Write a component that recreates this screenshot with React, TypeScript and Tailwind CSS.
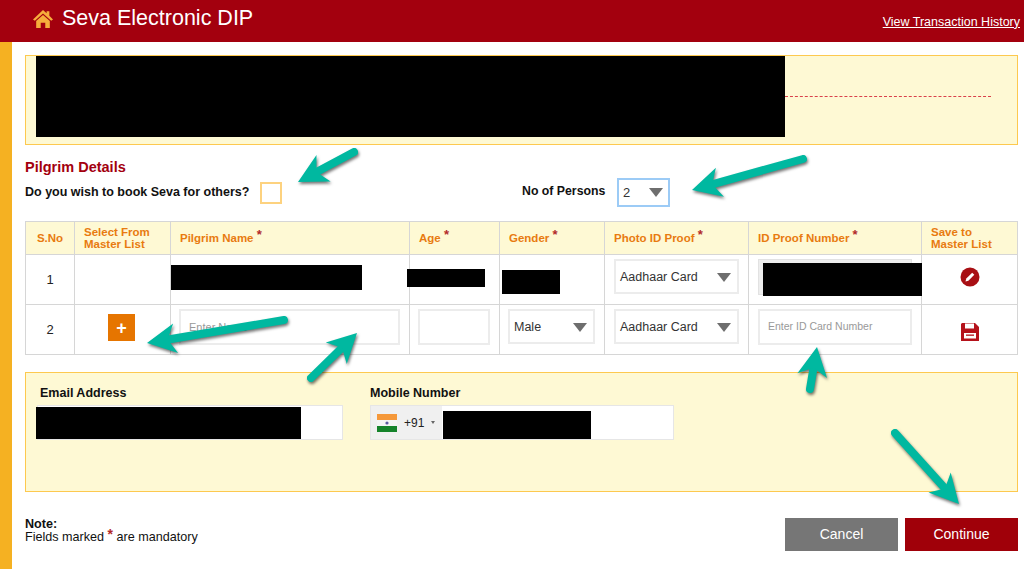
import React from 'react';

const sans = "font-['Liberation_Sans',Arial,sans-serif]";

const Star = () => <sup className="text-[#b22a2a] text-[13px] font-bold top-[-3px]">*</sup>;

const Select: React.FC<{ value: string; className: string }> = ({ value, className }) => (
  <div className={`h-[35px] border-2 border-[#ececec] bg-white flex items-center justify-between pl-[4px] pr-[6px] pt-[1px] text-[12.5px] text-[#333] ${className}`}>
    <span>{value}</span>
    <span className="w-0 h-0 border-x-[7px] border-x-transparent border-t-[9px] border-t-[#6e6e6e]"></span>
  </div>
);

const Arrow: React.FC<{ from: [number, number]; to: [number, number] }> = ({ from, to }) => {
  const dx = to[0] - from[0];
  const dy = to[1] - from[1];
  const len = Math.hypot(dx, dy);
  const ux = dx / len;
  const uy = dy / len;
  const at = (back: number, side: number) =>
    `${to[0] - ux * back - uy * side},${to[1] - uy * back + ux * side}`;
  const neck = [to[0] - ux * 20, to[1] - uy * 20];
  return (
    <g style={{ filter: 'drop-shadow(1px 2px 1.5px rgba(0,0,0,0.55))' }}>
      <line x1={from[0]} y1={from[1]} x2={neck[0]} y2={neck[1]} stroke="#00b8a0" strokeWidth="8" strokeLinecap="round" />
      <polygon points={`${to[0]},${to[1]} ${at(29, 15)} ${at(21, 0)} ${at(29, -15)}`} fill="#00b8a0" />
    </g>
  );
};

const headCell = 'border border-[#d6d6d6] bg-[#fef9d4] text-[#e87b10] text-[11.5px] font-bold leading-[12px] align-middle';
const bodyCell = 'border border-[#d6d6d6] align-middle relative';
const fieldCell = 'border border-[#d6d6d6] align-top relative pt-[4px]';

export default function App() {
  return (
    <div className={`relative w-[1024px] h-[569px] overflow-hidden bg-white flex flex-col ${sans}`}>
      <header className="h-[42px] bg-[#a3000e] flex items-center justify-between pl-[32px] pr-[4px] text-white">
        <div className="flex items-center gap-[8px] pb-[5px]">
          <svg width="22" height="20" viewBox="0 0 24 22">
            <path d="M12 1 L1 11.5 L3 13 L12 5 L21 13 L23 11.5 L19 7.5 V2.5 H16 V4.7 Z" fill="#f6ad3c" />
            <path d="M4.5 13.2 L12 6.6 L19.5 13.2 V21 H14.5 V15 H9.5 V21 H4.5 Z" fill="#f6ad3c" />
          </svg>
          <span className="text-[21.5px] leading-none">Seva Electronic DIP</span>
        </div>
        <a className="text-[12.5px] underline mt-[2px]">View Transaction History</a>
      </header>

      <div className="flex-1 flex">
        <div className="w-[12px] shrink-0 bg-[#f5b122]"></div>
        <main className="flex-1 min-w-0 pl-[13px] pr-[6px] pt-[13px]">
          <section className="h-[90px] border border-[#fdc94f] bg-[#fef9d4] flex items-start pl-[10px]">
            <div className="w-[749px] h-[81px] bg-black"></div>
            <div className="w-[206px] mt-[40px] border-t border-dashed border-[#d9414a]"></div>
          </section>

          <h2 className="mt-[14px] text-[14.5px] leading-[16px] font-bold text-[#a3000e]">Pilgrim Details</h2>
          <div className="flex items-center h-[29px] mt-[3px]">
            <span className="w-[235px] text-[12.5px] font-bold text-[#111]">Do you wish to book Seva for others?</span>
            <span className="w-[22px] h-[22px] border-2 border-[#fdd27f] bg-white"></span>
            <span className="ml-[240px] w-[95px] text-[12.3px] font-bold text-[#111] -mt-[2px]">No of Persons</span>
            <div className="w-[53px] h-[29px] border-2 border-[#9ccbf6] bg-white flex items-center justify-between pl-[4px] pr-[5px] text-[13px] text-[#333]">
              <span>2</span>
              <span className="w-0 h-0 border-x-[7px] border-x-transparent border-t-[9px] border-t-[#6e6e6e]"></span>
            </div>
          </div>

          <table className="mt-[14px] w-[992px] table-fixed border-collapse">
            <colgroup>
              <col className="w-[49px]" />
              <col className="w-[96px]" />
              <col className="w-[239px]" />
              <col className="w-[90px]" />
              <col className="w-[105px]" />
              <col className="w-[144px]" />
              <col className="w-[173px]" />
              <col className="w-[96px]" />
            </colgroup>
            <thead>
              <tr className="h-[33px]">
                <th className={`${headCell} text-center`}>S.No</th>
                <th className={`${headCell} text-left pl-[9px]`}>Select From<br />Master List</th>
                <th className={`${headCell} text-left pl-[9px]`}>Pilgrim Name <Star /></th>
                <th className={`${headCell} text-left pl-[9px]`}>Age <Star /></th>
                <th className={`${headCell} text-left pl-[9px]`}>Gender <Star /></th>
                <th className={`${headCell} text-left pl-[9px]`}>Photo ID Proof <Star /></th>
                <th className={`${headCell} text-left pl-[9px]`}>ID Proof Number <Star /></th>
                <th className={`${headCell} text-left pl-[9px]`}>Save to<br />Master List</th>
              </tr>
            </thead>
            <tbody className="text-[13px] text-[#222]">
              <tr className="h-[50px]">
                <td className={`${bodyCell} text-center`}>1</td>
                <td className={bodyCell}></td>
                <td className={bodyCell}>
                  <div className="absolute left-0 top-[10px] w-[191px] h-[25px] bg-black"></div>
                </td>
                <td className={bodyCell}>
                  <div className="absolute left-[-3px] top-[14px] w-[78px] h-[18px] bg-black"></div>
                </td>
                <td className={bodyCell}>
                  <div className="absolute left-[2px] top-[15px] w-[58px] h-[24px] bg-black"></div>
                </td>
                <td className={`${fieldCell} px-[9px]`}>
                  <Select value="Aadhaar Card" className="w-[125px]" />
                </td>
                <td className={`${fieldCell} pl-[9px]`}>
                  <div className="w-[154px] h-[36px] bg-[#eeeeee] border border-[#e2e2e2]"></div>
                  <div className="absolute left-[14px] top-[8px] w-[159px] h-[33px] bg-black"></div>
                </td>
                <td className="border border-[#d6d6d6] align-top pt-[12px]">
                  <svg className="mx-auto" width="20" height="20" viewBox="0 0 20 20">
                    <circle cx="10" cy="10" r="9.5" fill="#a80f14" />
                    <path d="M5.5 14.5 L6.3 11.6 L12.2 5.7 L14.3 7.8 L8.4 13.7 Z" fill="#fff" />
                  </svg>
                </td>
              </tr>
              <tr className="h-[50px]">
                <td className={`${bodyCell} text-center`}>2</td>
                <td className="border border-[#d6d6d6] align-top pt-[9px] pr-[2px]">
                  <button className="mx-auto flex items-center justify-center w-[27px] h-[27px] bg-[#e67500] text-white text-[18px] font-bold leading-none">+</button>
                </td>
                <td className={`${fieldCell} pl-[8px] pr-[9px]`}>
                  <div className="h-[36px] border-2 border-[#ececec] flex items-center pl-[8px] text-[11px] text-[#999]">Enter Name</div>
                </td>
                <td className={`${fieldCell} pl-[8px]`}>
                  <div className="w-[72px] h-[36px] border-2 border-[#ececec]"></div>
                </td>
                <td className={`${fieldCell} pl-[8px]`}>
                  <Select value="Male" className="w-[87px]" />
                </td>
                <td className={`${fieldCell} px-[9px]`}>
                  <Select value="Aadhaar Card" className="w-[125px]" />
                </td>
                <td className={`${fieldCell} pl-[9px]`}>
                  <div className="w-[154px] h-[36px] border-2 border-[#ececec] flex items-center pl-[8px] text-[10.5px] text-[#999]">Enter ID Card Number</div>
                </td>
                <td className="border border-[#d6d6d6] align-top pt-[17px]">
                  <svg className="mx-auto" width="20" height="20" viewBox="0 0 20 20">
                    <path fillRule="evenodd" d="M2 1 H15 L19 5 V19 H1 V2 Z M5 1.5 V6.5 H14 V1.5 Z M4 11 V16.5 H16 V11 Z" fill="#b5121b" />
                    <rect x="6" y="12.5" width="8" height="1.3" fill="#b5121b" />
                  </svg>
                </td>
              </tr>
            </tbody>
          </table>

          <section className="mt-[17px] h-[120px] border border-[#fdc94f] bg-[#fef9d4] pl-[11px] pt-[13px] flex gap-[27px]">
            <div className="w-[306px]">
              <label className="block pl-[3px] text-[12.5px] leading-[14px] font-bold text-[#111]">Email Address</label>
              <div className="relative mt-[5px] h-[35px] border border-[#e6e6e6] bg-white">
                <div className="absolute left-[-2px] top-[1px] w-[265px] h-[32px] bg-black"></div>
              </div>
            </div>
            <div className="w-[304px]">
              <label className="block text-[12.5px] leading-[14px] font-bold text-[#111]">Mobile Number</label>
              <div className="relative mt-[5px] h-[35px] border border-[#e6e6e6] bg-white flex">
                <div className="w-[71px] bg-[#f0f0f0] flex items-center pl-[6px] gap-[7px] text-[12px] text-[#222]">
                  <svg width="20" height="18" viewBox="0 0 20 18">
                    <rect width="20" height="6" fill="#f5983a" />
                    <rect y="6" width="20" height="6" fill="#f4f4f4" />
                    <rect y="12" width="20" height="6" fill="#15832a" />
                    <circle cx="10" cy="9" r="1.6" fill="#5a5aa0" />
                  </svg>
                  <span>+91</span>
                  <span className="w-0 h-0 border-x-[2.5px] border-x-transparent border-t-[3px] border-t-[#666]"></span>
                </div>
                <div className="absolute left-[72px] top-[5px] w-[148px] h-[28px] bg-black"></div>
              </div>
            </div>
          </section>

          <div className="mt-[26px] flex justify-between items-start">
            <p className="text-[12.6px] leading-[13px] text-[#111]">
              <b>Note:</b><br />
              Fields marked <sup className="text-[#b22a2a] text-[14px] font-bold top-[-2px]">*</sup> are mandatory
            </p>
            <div className="flex gap-[7px]">
              <button className="w-[113px] h-[33px] bg-[#767676] text-white text-[14px]">Cancel</button>
              <button className="w-[113px] h-[33px] bg-[#a00009] text-white text-[14px]">Continue</button>
            </div>
          </div>
        </main>
      </div>

      {/* annotation arrows drawn on top of the page */}
      <svg className="absolute inset-0 pointer-events-none" width="1024" height="569">
        <Arrow from={[354, 152]} to={[298, 182]} />
        <Arrow from={[803, 159]} to={[692, 190]} />
        <Arrow from={[284, 320]} to={[147, 343]} />
        <Arrow from={[311, 378]} to={[357, 333]} />
        <Arrow from={[810, 389]} to={[817, 347]} />
        <Arrow from={[895, 433]} to={[959, 504]} />
      </svg>
    </div>
  );
}
